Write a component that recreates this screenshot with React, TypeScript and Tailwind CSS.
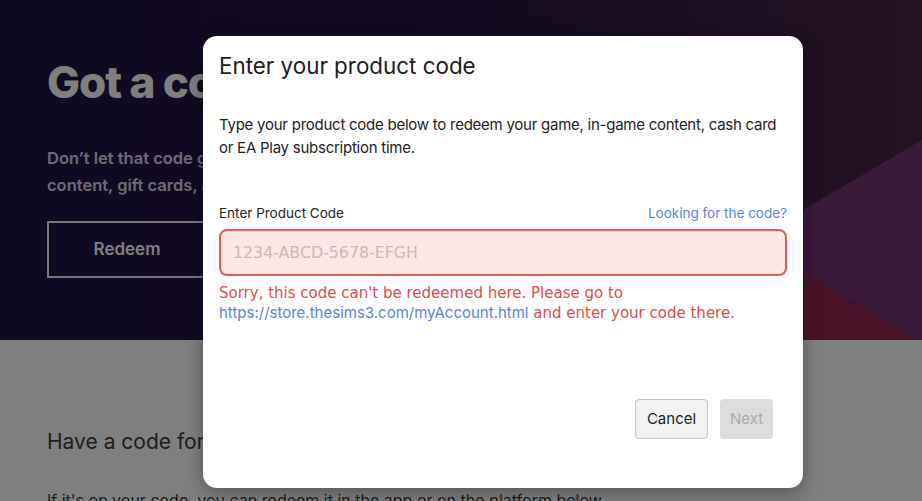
import React from 'react';

const font = { fontFamily: 'Inter, "Noto Sans", "Liberation Sans", sans-serif' };
const alt = { fontFamily: '"DejaVu Sans", Verdana, sans-serif' };

function HeroArt() {
  return (
    <svg className="absolute inset-0 h-full w-full" viewBox="0 0 922 340" preserveAspectRatio="none">
      <defs>
        <linearGradient id="hero" x1="0" y1="0" x2="1" y2="0">
          <stop offset="0" stopColor="#1e1444" />
          <stop offset="0.55" stopColor="#2c1844" />
          <stop offset="1" stopColor="#4a2444" />
        </linearGradient>
      </defs>
      <rect width="922" height="340" fill="url(#hero)" />
      <polygon points="750,241 922,140 922,340 918,340" fill="#743470" />
      <polygon points="750,241 918,340 680,340" fill="#94244c" />
    </svg>
  );
}

export default function App() {
  return (
    <div className="relative h-[501px] w-[922px] overflow-hidden bg-white" style={font}>
      {/* page behind the dialog */}
      <section className="relative h-[340px] overflow-hidden">
        <HeroArt />
        <div className="relative flex flex-col pl-[47px] pt-[56px]">
          <h1 className="text-[44px] font-extrabold leading-[52px] tracking-tight text-white">Got a code?</h1>
          <p className="mt-[37px] text-[16.5px] font-semibold leading-[27px] text-[#d8d6ea]">
            Don’t let that code go to waste. Redeem it for games, in-game
            <br />
            content, gift cards, and more.
          </p>
          <button className="mt-[22px] h-[57px] w-[160px] border-2 border-[#f0f0f0] text-[17px] font-semibold text-white">
            Redeem
          </button>
        </div>
      </section>
      <section className="flex flex-col pl-[47px] pt-[88px]">
        <h2 className="text-[21px] leading-[28px] text-[#3c3c3c]">Have a code for a game?</h2>
        <p className="mt-[32px] text-[16px] text-[#3c3c3c]">If it's on your code, you can redeem it in the app or on the platform below.</p>
      </section>

      {/* dim overlay + dialog */}
      <div className="absolute inset-0 bg-black/50">
        <div className="ml-[203px] mt-[36px] flex h-[452px] w-[600px] flex-col rounded-[14px] bg-white px-4 pt-4 shadow-[0_4px_18px_rgba(0,0,0,0.35)]">
          <h3 className="text-[22.4px] leading-[28px] text-[#1c1c1c]">Enter your product code</h3>
          <p className="mt-[33px] text-[15px] leading-[23px] tracking-[-0.25px] text-[#222]">
            Type your product code below to redeem your game, in-game content, cash card or EA Play subscription time.
          </p>
          <div className="mt-[45px] flex items-center justify-between text-[13.5px] leading-[18px]">
            <span className="text-[#222]">Enter Product Code</span>
            <a className="text-[#5b80e2]">Looking for the code?</a>
          </div>
          <input
            className="mt-[7px] h-[47px] w-full rounded-lg border-2 border-[#e25a5a] bg-[#fde7e3] px-[12px] text-[15.8px] outline-none placeholder:text-[#cdb8b5]"
            style={alt}
            placeholder="1234-ABCD-5678-EFGH"
          />
          <p className="mt-2 text-[15px] leading-[19px] text-[#e24b4b]" style={alt}>
            Sorry, this code can't be redeemed here. Please go to{' '}
            <br />
            <a className="text-[#5b80e2]" style={font}>
              https://store.thesims3.com/myAccount.html
            </a>{' '}
            and enter your code there.
          </p>
          <div className="mt-auto flex justify-end gap-3 pb-[49px] pr-[14px]">
            <button className="h-[40px] w-[73px] rounded border border-[#c6c6c6] bg-[#f2f2f2] text-[15px] text-[#222]">
              Cancel
            </button>
            <button className="h-[40px] w-[53px] rounded bg-[#dcdcdc] text-[15px] text-[#ababab]">Next</button>
          </div>
        </div>
      </div>
    </div>
  );
}
